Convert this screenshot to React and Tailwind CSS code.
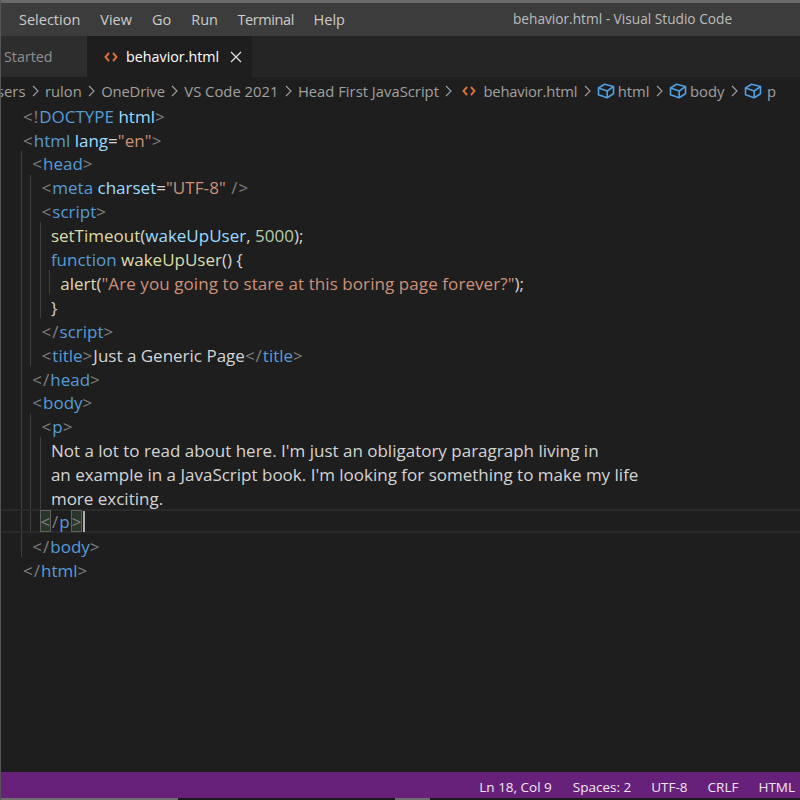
import React from "react";

const kw = "text-[#569cd6]";
const br = "text-[#808080] tracking-[1px]";
const attr = "text-[#9cdcfe]";
const str = "text-[#ce9178] tracking-[0.08px]";
const fn = "text-[#dcdcaa]";
const txt = "text-[#d4d4d4]";
const num = "text-[#b5cea8]";

const lines = [
  { level: 0, parts: [["<!", br], ["DOCTYPE", kw], [" html", attr], [">", br]] },
  { level: 0, parts: [["<", br], ["html", kw], [" lang", attr], ["=", txt], ['"en"', str], [">", br]] },
  { level: 1, parts: [["<", br], ["head", kw], [">", br]] },
  { level: 2, parts: [["<", br], ["meta", kw], [" charset", attr], ["=", txt], ['"UTF-8"', str], [" />", br]] },
  { level: 2, parts: [["<", br], ["script", kw], [">", br]] },
  { level: 3, parts: [["setTimeout", fn], ["(", txt], ["wakeUpUser", attr], [", ", txt], ["5000", num], [");", txt]] },
  { level: 3, parts: [["function", kw], [" ", txt], ["wakeUpUser", fn], ["() {", txt]] },
  { level: 4, parts: [["alert", fn], ["(", txt], ['"Are you going to stare at this boring page forever?"', str], [");", txt]] },
  { level: 3, parts: [["}", txt]] },
  { level: 2, parts: [["</", br], ["script", kw], [">", br]] },
  { level: 2, parts: [["<", br], ["title", kw], [">", br], ["Just a Generic Page", txt], ["</", br], ["title", kw], [">", br]] },
  { level: 1, parts: [["</", br], ["head", kw], [">", br]] },
  { level: 1, parts: [["<", br], ["body", kw], [">", br]] },
  { level: 2, parts: [["<", br], ["p", kw], [">", br]] },
  { level: 3, parts: [["Not a lot to read about here. I'm just an obligatory paragraph living in", txt]] },
  { level: 3, parts: [["an example in a JavaScript book. I'm looking for something to make my life", txt]] },
  { level: 3, parts: [["more exciting.", txt]] },
  { level: 2, active: true },
  { level: 1, parts: [["</", br], ["body", kw], [">", br]] },
  { level: 0, parts: [["</", br], ["html", kw], [">", br]] },
];

const CodeIcon = ({ className }) => (
  <svg viewBox="0 0 14 10" className={className} fill="none" stroke="#d9723a" strokeWidth="1.9">
    <path d="M5 1 1.5 5 5 9" />
    <path d="M9 1l3.5 4L9 9" />
  </svg>
);

const CubeIcon = () => (
  <svg viewBox="0 0 18 16" className="w-[18px] h-4 shrink-0" fill="none" stroke="#4f9fe3" strokeWidth="1.6" strokeLinejoin="round">
    <path d="M7.5 1.2 16.5 3.6v7.2l-6.3 4-8.7-3V5z" />
    <path d="M1.5 5l8.7 3 6.3-4.4M10.2 8v6.8" />
  </svg>
);

const Chevron = () => (
  <span className="w-[19.5px] flex justify-center shrink-0">
    <svg viewBox="0 0 7 12" className="w-[7px] h-3" fill="none" stroke="#a0a0a0" strokeWidth="1.1">
      <path d="M1 1l5 5-5 5" />
    </svg>
  </span>
);

const Bracket = ({ children }) => (
  <span className="h-[22px] w-[11.5px] pt-[2px] flex items-center justify-center bg-[#2a352b] border border-[#5c635b] text-[#808080]">
    {children}
  </span>
);

function CodeLine({ line }) {
  return (
    <div
      className={`flex h-[23.9px] items-center pl-5 whitespace-pre ${
        line.active ? "border-y-2 border-[#2a2a2a]" : ""
      }`}
    >
      {Array.from({ length: line.level }).map((_, i) => (
        <span key={i} className="w-[9.3px] h-full border-l border-[#404040] shrink-0" />
      ))}
      {line.active ? (
        <span className="inline-flex items-center leading-[22px]">
          <Bracket>&lt;</Bracket>
          <span className="text-[#808080] ml-[1px] pt-[2px]">/</span>
          <span className={`${kw} ml-[1px] pt-[2px]`}>p</span>
          <span className="w-[1px]" />
          <Bracket>&gt;</Bracket>
          <span className="w-[2px] h-[21px] ml-[1px] bg-[#aeafad]" />
        </span>
      ) : (
        <span className="pl-[2px] pt-[3px]">
          {line.parts.map(([text, color], i) => (
            <span key={i} className={color}>
              {text}
            </span>
          ))}
        </span>
      )}
    </div>
  );
}

export default function App() {
  return (
    <div className="w-[800px] h-[800px] flex flex-col overflow-hidden bg-[#1e1e1e] border-l border-[#555555] font-['Open_Sans',sans-serif]">
      {/* Title bar */}
      <div className="h-9 shrink-0 bg-[#3c3c3c] border-t-[3px] border-[#6a6a6a] flex items-center text-[14.5px] text-[#cccccc]">
        <div className="flex pl-[18px] gap-5">
          <span>Selection</span>
          <span>View</span>
          <span>Go</span>
          <span>Run</span>
          <span className="-mx-[0.5px] tracking-[-0.4px]">Terminal</span>
          <span>Help</span>
        </div>
        <span className="ml-[168px] text-[#bdbdbd] text-[13.7px]">behavior.html - Visual Studio Code</span>
      </div>

      {/* Tabs */}
      <div className="h-[41px] shrink-0 bg-[#252526] flex text-[14.3px]">
        <div className="w-[86px] bg-[#2d2d2d] flex items-center pl-[3px] text-[#8f8f8f]">Started</div>
        <div className="w-[165px] bg-[#1e1e1e] flex items-center pl-[17px] text-white">
          <CodeIcon className="w-[14px] h-[10px] mr-2 shrink-0" />
          <span>behavior.html</span>
          <svg viewBox="0 0 12 12" className="w-3 h-3 ml-[11px]" fill="none" stroke="#e0e0e0" strokeWidth="1.3">
            <path d="M1 1l10 10M11 1 1 11" />
          </svg>
        </div>
      </div>

      {/* Breadcrumb */}
      <div className="h-[26px] pt-[2px] shrink-0 flex items-center whitespace-nowrap text-[14.8px] text-[#a0a0a0] overflow-hidden">
        <span className="-ml-1">sers</span>
        <Chevron />
        <span>rulon</span>
        <Chevron />
        <span className="tracking-[-0.2px]">OneDrive</span>
        <Chevron />
        <span>VS Code 2021</span>
        <Chevron />
        <span>Head First JavaScript</span>
        <Chevron />
        <CodeIcon className="w-[14px] h-[10px] ml-1 mr-[7px] shrink-0" />
        <span className="tracking-[-0.2px]">behavior.html</span>
        <Chevron />
        <CubeIcon />
        <span className="ml-[3px]">html</span>
        <Chevron />
        <CubeIcon />
        <span className="ml-[3px]">body</span>
        <Chevron />
        <CubeIcon />
        <span className="ml-[5px]">p</span>
      </div>

      {/* Editor */}
      <div className="flex-1 text-[17px]">
        {lines.map((line, i) => (
          <CodeLine key={i} line={line} />
        ))}
      </div>

      {/* Status bar */}
      <div className="h-[26px] pt-1 shrink-0 bg-[#68217a] flex items-center justify-end gap-5 pr-[5px] text-[13.5px] text-[#f0e6f2]">
        <span className="mr-[1px]">Ln 18, Col 9</span>
        <span>Spaces: 2</span>
        <span>UTF-8</span>
        <span>CRLF</span>
        <span>HTML</span>
      </div>

      {/* Edge of the window below the status bar */}
      <div className="h-[2px] shrink-0 flex bg-[#1a1a1a]">
        <div className="w-[177px] bg-[#6e6e6e]" />
        <div className="w-[217px]" />
        <div className="w-[35px] bg-[#6e6e6e]" />
      </div>
    </div>
  );
}
